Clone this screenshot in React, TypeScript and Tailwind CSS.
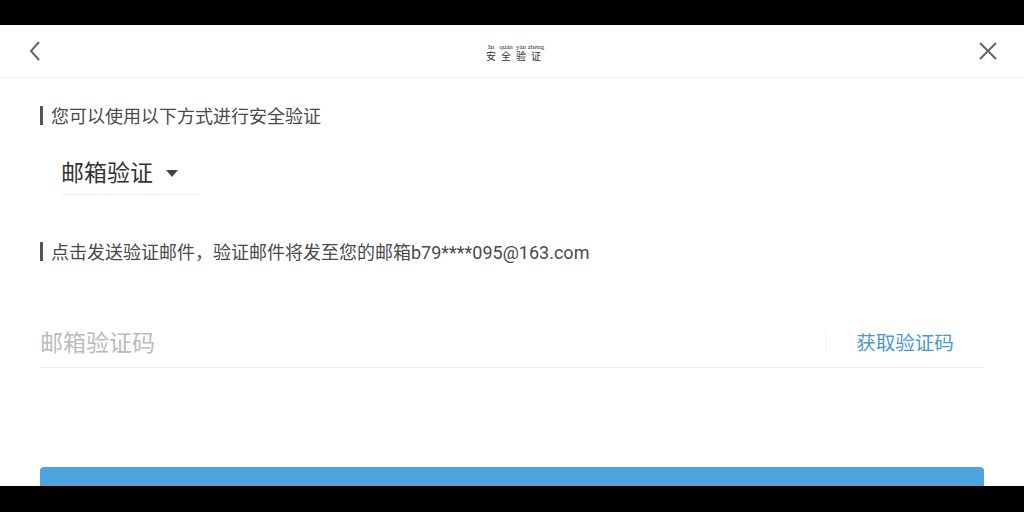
import { FC } from 'react';

const cjk = { fontFamily: 'Roboto, "Noto Sans CJK SC", "Noto Sans", sans-serif' };
const serif = { fontFamily: '"Liberation Serif", "Noto Sans CJK SC", serif' };

// title with pinyin over each character
const title: { py: string; ch: string }[] = [
  { py: 'ān', ch: '安' },
  { py: 'quán', ch: '全' },
  { py: 'yàn', ch: '验' },
  { py: 'zhèng', ch: '证' },
];

const SectionLabel: FC<{ text: string }> = ({ text }) => (
  <div className="flex items-center h-[20px]">
    <span className="w-[3px] h-[19px] bg-[#555] mr-[8px]" />
    <span className="text-[18px] text-[#4a4a4a] leading-none whitespace-nowrap pt-[4px]">{text}</span>
  </div>
);

const App: FC = () => {
  return (
    <div className="w-[1024px] h-[512px] bg-black flex flex-col overflow-hidden" style={cjk}>
      <div className="h-[25px] shrink-0 bg-black" />
      <div className="h-[461px] shrink-0 bg-white flex flex-col overflow-hidden">
        {/* header */}
        <div className="h-[53px] shrink-0 border-b border-[#f2f2f2] flex items-center justify-between pl-[26px] pr-[25px]">
          <svg width="18" height="24" viewBox="0 0 18 24" fill="none" stroke="#666" strokeWidth="2">
            <path d="M13 3 L5 12 L13 21" />
          </svg>
          <div className="flex items-end gap-[3px] pt-[2px] ml-[6px]" style={serif}>
            {title.map((t) => (
              <div key={t.ch} className="flex flex-col items-center w-[12px]">
                <span className="text-[7px] leading-[8px] text-[#333] whitespace-nowrap">{t.py}</span>
                <span className="text-[10px] leading-[11px] text-[#333]">{t.ch}</span>
              </div>
            ))}
          </div>
          <svg width="22" height="22" viewBox="0 0 22 22" fill="none" stroke="#666" strokeWidth="2">
            <path d="M3 3 L19 19 M19 3 L3 19" />
          </svg>
        </div>

        <div className="px-[40px] flex flex-col shrink-0">
          <div className="mt-[27px]">
            <SectionLabel text="您可以使用以下方式进行安全验证" />
          </div>

          {/* method picker */}
          <div className="mt-[29px] ml-[20px] w-[140px] border-b border-[#f0f0f0] h-[41px] pb-[2px] flex items-center">
            <span className="text-[23px] text-[#333] leading-none ml-[1px]">邮箱验证</span>
            <svg width="12" height="8" viewBox="0 0 12 8" className="ml-[13px]">
              <path d="M0 1 L12 1 L6 8 Z" fill="#444" />
            </svg>
          </div>

          <div className="mt-[46px]">
            <SectionLabel text="点击发送验证邮件，验证邮件将发至您的邮箱b79****095@163.com" />
          </div>

          {/* code input */}
          <div className="mt-[53px] h-[54px] border-b border-[#f0f0f0] flex items-center">
            <span className="flex-1 text-[23px] text-[#bbb] leading-none pt-[6px]">邮箱验证码</span>
            <span className="w-px h-[22px] bg-[#f0f0f0]" />
            <span className="w-[158px] text-center text-[19.5px] text-[#4a9ad0] leading-none pt-[6px]">获取验证码</span>
          </div>

          <div className="mt-[99px] h-[40px] rounded-[4px] bg-[#4fa3dc]" />
        </div>
      </div>
      <div className="h-[26px] shrink-0 bg-black" />
    </div>
  );
};

export default App;
